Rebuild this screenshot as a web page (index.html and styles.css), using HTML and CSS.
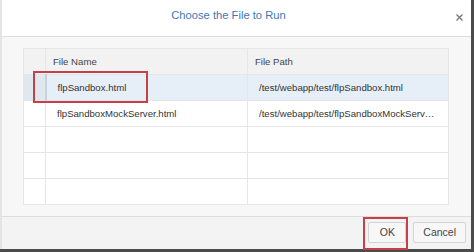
FILE: index.html
```html
<!DOCTYPE html>
<html lang="en">
<head>
    <meta charset="UTF-8">
    <title>Choose the File to Run</title>
    <link rel="stylesheet" href="styles.css">
</head>
<body>
    <div class="dialog">
        <header class="dialog-header">
            <h1 class="dialog-title">Choose the File to Run</h1>
            <svg class="dialog-close" width="7" height="7" viewBox="0 0 7 7">
                <path d="M0.5 0.5 L6.5 6.5 M6.5 0.5 L0.5 6.5" stroke="#777" stroke-width="1.3" fill="none"/>
            </svg>
        </header>

        <main class="dialog-content">
            <table class="file-table">
                <colgroup>
                    <col class="col-selector">
                    <col class="col-name">
                    <col class="col-path">
                </colgroup>
                <thead>
                    <tr>
                        <th class="selector"></th>
                        <th>File Name</th>
                        <th>File Path</th>
                    </tr>
                </thead>
                <tbody>
                    <tr class="selected">
                        <td class="selector"></td>
                        <td>flpSandbox.html</td>
                        <td>/test/webapp/test/flpSandbox.html</td>
                    </tr>
                    <tr>
                        <td class="selector"></td>
                        <td>flpSandboxMockServer.html</td>
                        <td>/test/webapp/test/flpSandboxMockServ…</td>
                    </tr>
                    <tr><td class="selector"></td><td></td><td></td></tr>
                    <tr><td class="selector"></td><td></td><td></td></tr>
                    <tr><td class="selector"></td><td></td><td></td></tr>
                </tbody>
            </table>
            <!-- marque rouge autour de la ligne choisie -->
            <div class="mark mark-row"></div>
        </main>

        <footer class="dialog-footer">
            <button class="btn btn-ok">OK</button>
            <button class="btn">Cancel</button>
            <div class="mark mark-ok"></div>
        </footer>
    </div>
</body>
</html>
```

FILE: styles.css
```css
/* Reset */
* {
    margin: 0;
    padding: 0;
    box-sizing: border-box;
    font-family: 'Liberation Sans', Arial, sans-serif;
}

body {
    background: #4b4b4b;
    width: 474px;
    height: 252px;
    overflow: hidden;
}

/* Boite de dialogue */
.dialog {
    width: 471px;
    height: 249px;
    background: #f7f7f7;
    border-left: 2px solid #e4e4e4;
    display: flex;
    flex-direction: column;
}

.dialog-header {
    height: 37px;
    background: #fff;
    border-bottom: 1px solid #dcdcdc;
    display: flex;
    align-items: center;
    justify-content: center;
    padding-right: 16px;
    position: relative;
}

.dialog-title {
    font-size: 11.2px;
    font-weight: 400;
    color: #3f79b5;
    margin-top: -6px;
}

.dialog-close {
    position: absolute;
    right: 8px;
    top: 14px;
}

/* Tableau des fichiers */
.dialog-content {
    flex: 1;
    padding: 11px 21px 0 21px;
    position: relative;
}

.file-table {
    width: 425px;
    table-layout: fixed;
    border-collapse: collapse;
    background: #fff;
    border: 1px solid #e2e2e2;
    font-size: 9.6px;
    color: #333;
}

.col-selector { width: 22px; }
.col-name { width: 202px; }
.col-path { width: 201px; }

.file-table th,
.file-table td {
    height: 26px;
    border: 1px solid #e6e6e6;
    text-align: left;
    font-weight: 400;
    white-space: nowrap;
    overflow: hidden;
}

.file-table th {
    background: #f2f2f2;
    padding-left: 7px;
    color: #444;
}

.file-table td {
    padding-left: 11px;
}

.file-table .selector {
    padding: 0;
}

.selected td {
    background: #e6eef7;
}

.selected td.selector {
    background: #dfe7ef;
    border-right: 2px solid #c9d2db;
}

/* Pied avec les boutons */
.dialog-footer {
    height: 33px;
    border-top: 1px solid #dcdcdc;
    background: #f3f3f3;
    display: flex;
    justify-content: flex-end;
    align-items: center;
    gap: 7px;
    padding: 0 5px 2px 0;
    position: relative;
}

.btn {
    height: 21px;
    padding: 0 9px;
    background: #f7f7f7;
    border: 1px solid #d4d4d4;
    border-radius: 2px;
    font-size: 10.5px;
    color: #444;
}

.btn-ok {
    width: 38px;
}

/* Encadrés rouges */
.mark {
    position: absolute;
    border: 2px solid #c5404b;
    pointer-events: none;
}

.mark-row {
    left: 31px;
    top: 34px;
    width: 115px;
    height: 32px;
}

.mark-ok {
    right: 63px;
    top: 0;
    width: 45px;
    height: 33px;
}
```
